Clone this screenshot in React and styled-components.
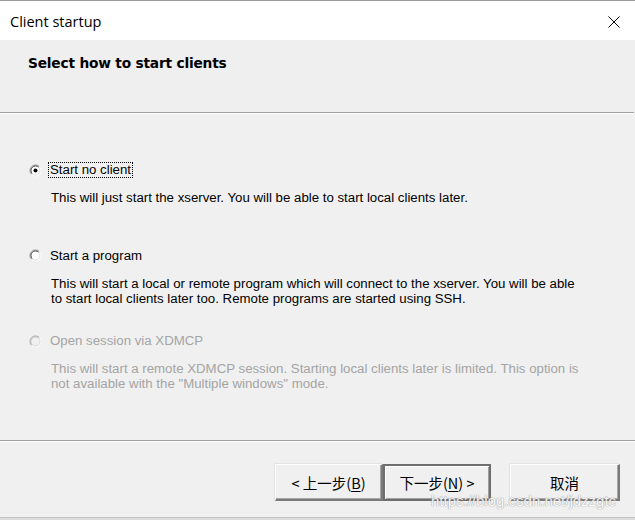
import React, { useState } from 'react';
import styled, { createGlobalStyle } from 'styled-components';

const GlobalStyle = createGlobalStyle`
  html, body {
    margin: 0;
    padding: 0;
    background: #f0f0f0;
  }
`;

const options = [
  {
    id: 'none',
    label: 'Start no client',
    text: ['This will just start the xserver. You will be able to start local clients later.'],
  },
  {
    id: 'program',
    label: 'Start a program',
    text: [
      'This will start a local or remote program which will connect to the xserver. You will be able',
      'to start local clients later too. Remote programs are started using SSH.',
    ],
  },
  {
    id: 'xdmcp',
    label: 'Open session via XDMCP',
    disabled: true,
    text: [
      'This will start a remote XDMCP session. Starting local clients later is limited. This option is',
      'not available with the "Multiple windows" mode.',
    ],
  },
];

const RadioIcon = ({ checked, disabled }) => (
  <svg width="13" height="13" viewBox="0 0 13 13">
    <circle cx="6.5" cy="6.5" r="5.5" fill={disabled ? '#f0f0f0' : '#fff'} />
    <path d="M2.6 10.4 A5.5 5.5 0 0 1 10.4 2.6" fill="none" stroke={disabled ? '#a0a0a0' : '#8a8a8a'} strokeWidth="1" />
    <path d="M10.4 2.6 A5.5 5.5 0 0 1 2.6 10.4" fill="none" stroke="#ffffff" strokeWidth="1" />
    <path d="M3.3 9.7 A4.5 4.5 0 0 1 9.7 3.3" fill="none" stroke={disabled ? '#c8c8c8' : '#4a4a4a'} strokeWidth="1" />
    <path d="M9.7 3.3 A4.5 4.5 0 0 1 3.3 9.7" fill="none" stroke="#dcdcdc" strokeWidth="1" />
    {checked && <circle cx="6.5" cy="6.5" r="2" fill="#000" />}
  </svg>
);

const CloseIcon = () => (
  <svg width="12" height="12" viewBox="0 0 12 12">
    <path d="M0.5 0.5 L11.5 11.5 M11.5 0.5 L0.5 11.5" stroke="#000" strokeWidth="1" />
  </svg>
);

const App = () => {
  const [choice, setChoice] = useState('none');

  return (
    <Dialog>
      <GlobalStyle />
      <TitleBar>
        <Title>Client startup</Title>
        <CloseButton>
          <CloseIcon />
        </CloseButton>
      </TitleBar>

      <Header>
        <Heading>Select how to start clients</Heading>
      </Header>

      <Body>
        {options.map((opt) => (
          <Option key={opt.id}>
            <RadioRow
              $disabled={opt.disabled}
              onClick={() => !opt.disabled && setChoice(opt.id)}
            >
              <RadioIcon checked={choice === opt.id} disabled={opt.disabled} />
              <Label $focused={choice === opt.id} $disabled={opt.disabled}>
                {opt.label}
              </Label>
            </RadioRow>
            <Description $disabled={opt.disabled}>
              {opt.text.map((line) => (
                <div key={line}>{line}</div>
              ))}
            </Description>
          </Option>
        ))}
      </Body>

      <Footer>
        <Button>
          &lt; 上一步(<u>B</u>)
        </Button>
        <Button $default>
          下一步(<u>N</u>) &gt;
        </Button>
        <Button $wide>取消</Button>
        <Watermark>https://blog.csdn.net/jdzzgtc</Watermark>
      </Footer>
      <Edge />
    </Dialog>
  );
};

const Dialog = styled.div`
  width: 635px;
  height: 520px;
  display: flex;
  flex-direction: column;
  background: #f0f0f0;
  overflow: hidden;
`;

const TitleBar = styled.div`
  height: 40px;
  flex: none;
  background: #fff;
  border-top: 1px solid #9a9a9a;
  box-sizing: border-box;
  display: flex;
  align-items: center;
  justify-content: space-between;
  padding: 0 15px 0 10px;
`;

const Title = styled.div`
  font-family: 'Open Sans', 'Noto Sans', sans-serif;
  font-size: 14.5px;
  color: #000;
  margin-top: 1px;
`;

const CloseButton = styled.div`
  display: flex;
  align-items: center;
  margin-top: 2px;
`;

const Header = styled.div`
  height: 73px;
  flex: none;
  background: #efefef;
  border-bottom: 1px solid #a0a0a0;
  box-shadow: 0 1px 0 #fff;
  padding: 15px 0 0 28px;
  box-sizing: border-box;
  margin-right: 1px;
`;

const Heading = styled.div`
  font-family: 'DejaVu Sans', Verdana, sans-serif;
  font-weight: bold;
  font-size: 13.75px;
  color: #000;
  letter-spacing: -0.2px;
`;

const Body = styled.div`
  height: 328px;
  flex: none;
  box-sizing: border-box;
  padding: 49px 0 0 29px;
  font-family: 'Liberation Sans', Arial, sans-serif;
  font-size: 12px;
  border-bottom: 1px solid #a0a0a0;
  box-shadow: 0 1px 0 #fff;
`;

const Option = styled.div`
  height: 85.5px;
`;

const RadioRow = styled.div`
  display: flex;
  align-items: center;
  height: 16px;
  gap: 7px;
  cursor: ${(p) => (p.$disabled ? 'default' : 'pointer')};
`;

const Label = styled.span`
  font-size: 13.25px;
  line-height: 14px;
  padding: 0 1px;
  color: ${(p) => (p.$disabled ? '#a4a4a4' : '#000')};
  outline: ${(p) => (p.$focused ? '1px dotted #000' : 'none')};
`;

const Description = styled.div`
  margin: 12px 0 0 22px;
  font-size: 13.25px;
  line-height: 15px;
  color: ${(p) => (p.$disabled ? '#a4a4a4' : '#000')};
`;

const Footer = styled.div`
  position: relative;
  flex: 1;
  display: flex;
  align-items: flex-start;
  padding: 23px 0 0 275px;
  box-sizing: border-box;
  border-bottom: 1px solid #c4c4c4;
`;

const Button = styled.button`
  width: ${(p) => (p.$wide ? '110px' : '108px')};
  height: 37px;
  margin-left: ${(p) => (p.$wide ? '19px' : '0')};
  background: #f0f0f0;
  font-family: 'Noto Sans CJK SC', sans-serif;
  font-size: 14.5px;
  color: #000;
  padding: 0;
  box-sizing: border-box;
  border-style: solid;
  border-width: ${(p) => (p.$default ? '2px' : '1px 2px 2px 1px')};
  border-color: ${(p) =>
    p.$default ? '#6e6e6e' : '#ffffff #7a7a7a #7a7a7a #ffffff'};
  box-shadow: ${(p) =>
    p.$default ? 'inset 1px 1px 0 #fff, inset -1px -1px 0 #a0a0a0' : 'inset -1px -1px 0 #a8a8a8, -1px -1px 0 #e3e3e3'};

  u {
    text-underline-offset: 2px;
  }
`;

const Watermark = styled.div`
  position: absolute;
  left: 431px;
  top: 51px;
  font-family: 'Liberation Sans', Arial, sans-serif;
  font-size: 15px;
  color: #ffffff;
  opacity: 0.85;
  text-shadow: 0 0 1px #8a8a8a, 0 0 1px #8a8a8a;
  pointer-events: none;
`;

const Edge = styled.div`
  height: 2px;
  flex: none;
  background: #dcdcdc;
`;

export default App;
